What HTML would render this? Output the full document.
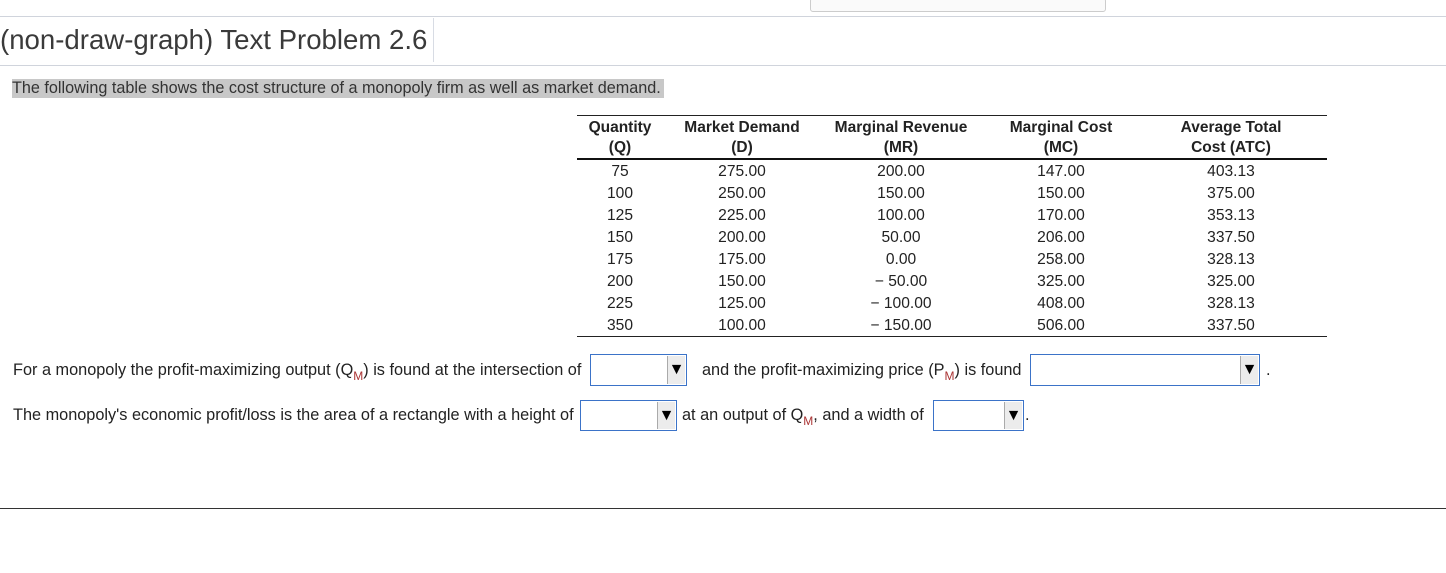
<!DOCTYPE html>
<html><head><style>
body{margin:0;width:1446px;height:573px;position:relative;background:#fff;font-family:"Liberation Sans",Arial,sans-serif;color:#222;overflow:hidden}
.a{position:absolute}
.c{position:absolute;width:200px;text-align:center;font-size:15.6px;line-height:22px}
.h{font-weight:bold;line-height:20px;font-size:15.5px}
.sel{position:absolute;border:1px solid #3b73c8;background:#fff;box-sizing:border-box}
.sel i{position:absolute;right:1px;top:1px;bottom:1px;width:17px;background:#ececec;border-left:1px solid #aaa;font-style:normal;font-size:16px;text-align:center;line-height:27px;color:#000}
.t{position:absolute;font-size:16.3px;line-height:20px;color:#222;white-space:nowrap}
sub{font-size:12px;color:#a33;vertical-align:-5px;line-height:0}
</style></head><body>
<div class="a" style="left:810px;top:-2px;width:294px;height:12px;border:1px solid #ccc;border-radius:3px;background:#fafafa"></div>
<div class="a" style="left:0;top:16px;width:1446px;height:1px;background:#d0d4dc"></div>
<div class="a" style="left:433px;top:18px;width:1px;height:44px;background:#d8dce4"></div>
<div class="a" style="left:0;top:24px;font-size:27.6px;line-height:32px;color:#3a3a3a">(non-draw-graph) Text Problem 2.6</div>
<div class="a" style="left:0;top:65px;width:1446px;height:1px;background:#d0d4dc"></div>
<div class="a" style="left:12px;top:79px;height:19px;width:652px;background:#c8c8c8;font-size:16.2px;line-height:19px;color:#333;white-space:nowrap">The following table shows the cost structure of a monopoly firm as well as market demand.</div>

<div class="a" style="left:577px;top:115px;width:750px;height:1px;background:#222"></div>
<div class="a" style="left:577px;top:158px;width:750px;height:2px;background:#111"></div>
<div class="a" style="left:577px;top:336px;width:750px;height:1px;background:#222"></div>

<div class="c h" style="left:520px;top:118px">Quantity<br>(Q)</div>
<div class="c h" style="left:642px;top:118px">Market Demand<br>(D)</div>
<div class="c h" style="left:801px;top:118px">Marginal Revenue<br>(MR)</div>
<div class="c h" style="left:961px;top:118px">Marginal Cost<br>(MC)</div>
<div class="c h" style="left:1131px;top:118px">Average Total<br>Cost (ATC)</div>

<div class="c" style="left:520px;top:161px">75<br>100<br>125<br>150<br>175<br>200<br>225<br>350</div>
<div class="c" style="left:642px;top:161px">275.00<br>250.00<br>225.00<br>200.00<br>175.00<br>150.00<br>125.00<br>100.00</div>
<div class="c" style="left:801px;top:161px">200.00<br>150.00<br>100.00<br>50.00<br>0.00<br>&minus; 50.00<br>&minus; 100.00<br>&minus; 150.00</div>
<div class="c" style="left:961px;top:161px">147.00<br>150.00<br>170.00<br>206.00<br>258.00<br>325.00<br>408.00<br>506.00</div>
<div class="c" style="left:1131px;top:161px">403.13<br>375.00<br>353.13<br>337.50<br>328.13<br>325.00<br>328.13<br>337.50</div>

<div class="t" style="left:13px;top:360px">For a monopoly the profit-maximizing output (Q<sub>M</sub>) is found at the intersection of</div>
<div class="sel" style="left:590px;top:354px;width:97px;height:32px"><i>▼</i></div>
<div class="t" style="left:702px;top:360px">and the profit-maximizing price (P<sub>M</sub>) is found</div>
<div class="sel" style="left:1030px;top:354px;width:230px;height:32px"><i>▼</i></div>
<div class="t" style="left:1266px;top:360px">.</div>

<div class="t" style="left:13px;top:405px">The monopoly's economic profit/loss is the area of a rectangle with a height of</div>
<div class="sel" style="left:580px;top:400px;width:97px;height:31px"><i>▼</i></div>
<div class="t" style="left:682px;top:405px">at an output of Q<sub>M</sub>, and a width of</div>
<div class="sel" style="left:933px;top:400px;width:91px;height:31px"><i>▼</i></div>
<div class="t" style="left:1025px;top:405px">.</div>

<div class="a" style="left:0;top:508px;width:1446px;height:1px;background:#333"></div>
</body></html>
